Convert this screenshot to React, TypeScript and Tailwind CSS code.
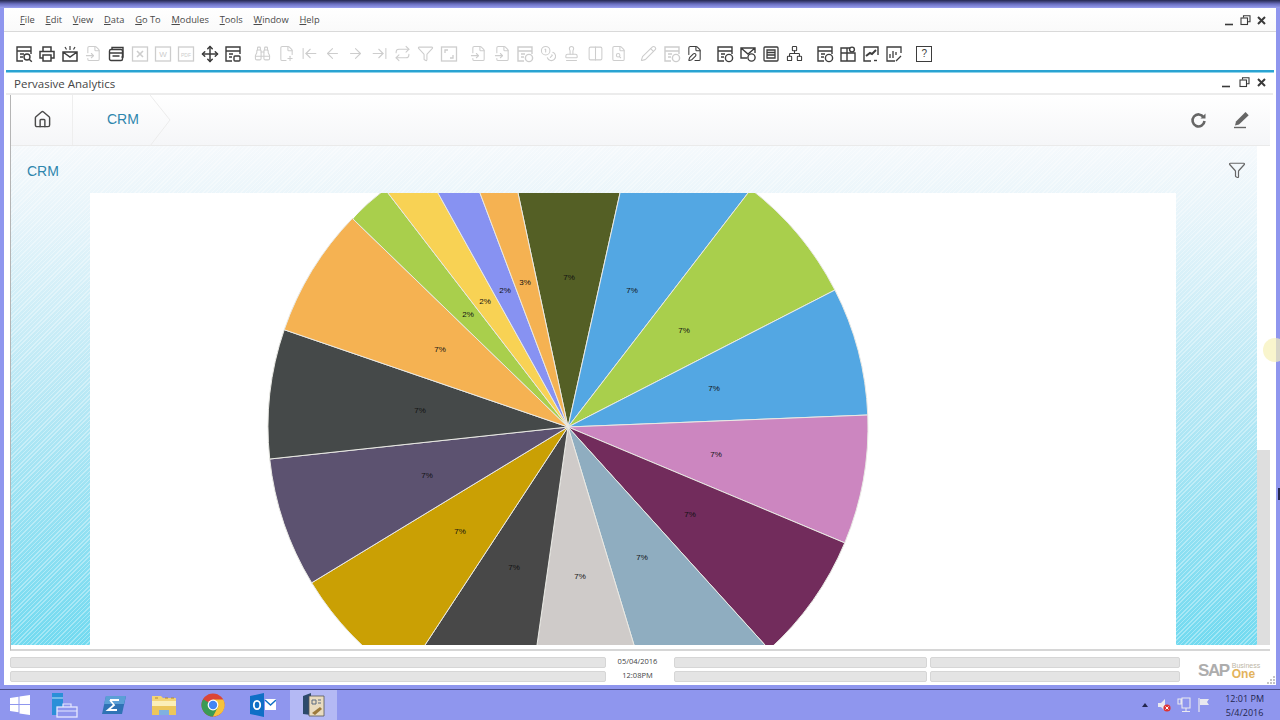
import type { ReactNode } from "react"
import {
  ArrowLeft,
  ArrowLeftToLine,
  ArrowRight,
  ArrowRightToLine,
  Binoculars,
  Coins,
  Columns2,
  FileInput,
  FilePen,
  FilePlus2,
  FileSearch,
  Funnel,
  House,
  Move,
  Network,
  Pencil,
  Repeat,
  Stamp,
} from "lucide-react"

const menu = [
  { key: "F", rest: "ile" },
  { key: "E", rest: "dit" },
  { key: "V", rest: "iew" },
  { key: "D", rest: "ata" },
  { key: "G", rest: "o To" },
  { key: "M", rest: "odules" },
  { key: "T", rest: "ools" },
  { key: "W", rest: "indow" },
  { key: "H", rest: "elp" },
]

const cx = 568
const cy = 427
const R = 300

// each slice ends where the next begins, going clockwise from the top
const slices = [
  { to: [52, -234], fill: "#545f25" },
  { to: [180, -234], fill: "#53a7e3" },
  { to: [267, -137], fill: "#a9cf4c" },
  { to: [300, -12], fill: "#53a7e3" },
  { to: [277, 116], fill: "#cc86c0" },
  { to: [197, 218], fill: "#722c5c" },
  { to: [66, 218], fill: "#8fadc0" },
  { to: [-31, 218], fill: "#cfcbc9" },
  { to: [-143, 218], fill: "#484848" },
  { to: [-255, 155], fill: "#caa004" },
  { to: [-298, 32], fill: "#5c5270" },
  { to: [-283, -97], fill: "#454949" },
  { to: [-215, -208], fill: "#f5b252" },
  { to: [-180, -234], fill: "#a9cf4c" },
  { to: [-130, -234], fill: "#f8d254" },
  { to: [-88, -234], fill: "#8792f2" },
  { to: [-50, -234], fill: "#f5b252" },
]

const labels = [
  [569, 277, "7%"],
  [632, 290, "7%"],
  [684, 330, "7%"],
  [714, 388, "7%"],
  [716, 454, "7%"],
  [690, 514, "7%"],
  [642, 557, "7%"],
  [580, 576, "7%"],
  [514, 567, "7%"],
  [460, 531, "7%"],
  [427, 475, "7%"],
  [420, 410, "7%"],
  [440, 349, "7%"],
  [468, 314, "2%"],
  [485, 301, "2%"],
  [505, 290, "2%"],
  [525, 282, "3%"],
] as const

function rim(v: number[]) {
  const len = Math.hypot(v[0], v[1])
  return [cx + (v[0] / len) * R, cy + (v[1] / len) * R]
}

function slicePath(i: number) {
  const prev = slices[(i + slices.length - 1) % slices.length].to
  const a = rim(prev)
  const b = rim(slices[i].to)
  return `M${cx} ${cy}L${a[0]} ${a[1]}A${R} ${R} 0 0 1 ${b[0]} ${b[1]}Z`
}

function PieChart() {
  return (
    <svg width="1086" height="452" viewBox="90 193 1086 452" className="block">
      {slices.map((s, i) => (
        <path key={i} d={slicePath(i)} fill={s.fill} stroke="#e9e9e4" strokeWidth="1" />
      ))}
      <path d="M353 219L375 192H340Z" fill="#ffffff" />
      {labels.map(([x, y, t], i) => (
        <text key={i} x={x} y={y + 3} textAnchor="middle" fontSize="8" fill="#111111" fontFamily="Liberation Sans, sans-serif">
          {t}
        </text>
      ))}
    </svg>
  )
}

function Form({ children }: { children?: ReactNode }) {
  return (
    <svg width="18" height="18" viewBox="0 0 18 18" fill="none" stroke="currentColor" strokeWidth="1.4">
      <path d="M8 16H2V2h14v7" />
      <path d="M2 6h14M5 9h4M5 12h3" />
      {children ?? <circle cx="13" cy="13" r="3.6" fill="#fff" />}
    </svg>
  )
}

function LetterBox({ text }: { text: string }) {
  return (
    <svg width="18" height="18" viewBox="0 0 18 18" fill="none" stroke="currentColor" strokeWidth="1.3">
      <rect x="1.5" y="2" width="15" height="14" />
      <text x="9" y="12" textAnchor="middle" fontSize={text.length > 1 ? 5 : 8} fill="currentColor" stroke="none" fontFamily="Liberation Sans, sans-serif">
        {text}
      </text>
    </svg>
  )
}

function Tool({ children, off }: { children: ReactNode; off?: boolean }) {
  return (
    <div className={`w-[23.25px] h-[18px] flex items-center justify-center ${off ? "text-[#cdcdcd]" : "text-[#3d3d3d]"}`}>
      {children}
    </div>
  )
}

function Toolbar() {
  const s = { size: 17, strokeWidth: 1.5 }
  return (
    <div className="h-[38px] shrink-0 flex items-center pt-[5px] pl-[8px] gap-[6.75px]">
      <div className="flex">
        <Tool>
          <Form>
            <circle cx="12" cy="12" r="3" fill="#fff" />
            <path d="M14.2 14.2l2.6 2.6" />
          </Form>
        </Tool>
        <Tool>
          <svg width="18" height="18" viewBox="0 0 18 18" fill="none" stroke="currentColor" strokeWidth="1.5">
            <path d="M5 6V2h8v4M5 13H2V6.5h14V13h-3" />
            <rect x="5" y="10" width="8" height="6" />
          </svg>
        </Tool>
        <Tool>
          <svg width="18" height="18" viewBox="0 0 18 18" fill="none" stroke="currentColor" strokeWidth="1.5">
            <path d="M2 7h14v9H2zM2 7l7 5 7-5" />
            <path d="M9 1v4M4 2l1.5 2.5M14 2l-1.5 2.5" strokeWidth="1.2" />
          </svg>
        </Tool>
        <Tool off><FileInput {...s} /></Tool>
        <Tool>
          <svg width="18" height="18" viewBox="0 0 18 18" fill="none" stroke="currentColor" strokeWidth="1.4">
            <path d="M4 4V2.5h11V12h-1.5" />
            <rect x="1.5" y="4.5" width="13" height="11" rx="1.5" />
            <path d="M1.5 8h13M4.5 11h7" />
          </svg>
        </Tool>
        <Tool off>
          <svg width="18" height="18" viewBox="0 0 18 18" fill="none" stroke="currentColor" strokeWidth="1.3">
            <rect x="1.5" y="2" width="15" height="14" />
            <path d="M6 6l6 6M12 6l-6 6" strokeWidth="1.6" />
          </svg>
        </Tool>
        <Tool off><LetterBox text="W" /></Tool>
        <Tool off><LetterBox text="PDF" /></Tool>
        <Tool><Move size={18} strokeWidth={2} /></Tool>
        <Tool>
          <Form>
            <rect x="10" y="11" width="6" height="5" rx="1" fill="#fff" />
          </Form>
        </Tool>
      </div>
      <div className="flex">
        <Tool off><Binoculars {...s} /></Tool>
        <Tool off><FilePlus2 {...s} /></Tool>
        <Tool off><ArrowLeftToLine {...s} /></Tool>
        <Tool off><ArrowLeft {...s} /></Tool>
        <Tool off><ArrowRight {...s} /></Tool>
        <Tool off><ArrowRightToLine {...s} /></Tool>
        <Tool off><Repeat {...s} /></Tool>
        <Tool off><Funnel {...s} /></Tool>
        <Tool off>
          <svg width="18" height="18" viewBox="0 0 18 18" fill="none" stroke="currentColor" strokeWidth="1.3">
            <rect x="1.5" y="2" width="15" height="14" />
            <path d="M5 8V5h3M13 10v3h-3" />
          </svg>
        </Tool>
      </div>
      <div className="flex">
        <Tool off><FileInput {...s} /></Tool>
        <Tool off><FileInput {...s} /></Tool>
        <Tool off><Form /></Tool>
        <Tool off><Coins {...s} /></Tool>
        <Tool off><Stamp {...s} /></Tool>
        <Tool off><Columns2 {...s} /></Tool>
        <Tool off><FileSearch {...s} /></Tool>
      </div>
      <div className="flex">
        <Tool off><Pencil {...s} /></Tool>
        <Tool off><Form /></Tool>
        <Tool><FilePen {...s} /></Tool>
      </div>
      <div className="flex">
        <Tool><Form /></Tool>
        <Tool>
          <svg width="18" height="18" viewBox="0 0 18 18" fill="none" stroke="currentColor" strokeWidth="1.4">
            <path d="M8 13H2V3h14v5M2 3l7 6 7-6" />
            <circle cx="12.5" cy="12.5" r="3.6" fill="#fff" />
          </svg>
        </Tool>
        <Tool>
          <svg width="18" height="18" viewBox="0 0 18 18" fill="none" stroke="currentColor" strokeWidth="1.3">
            <rect x="2" y="2" width="14" height="14" rx="1" />
            <path d="M5 5h8v8H5zM5 7.5h8M5 10h8" />
          </svg>
        </Tool>
        <Tool><Network {...s} /></Tool>
      </div>
      <div className="flex">
        <Tool><Form /></Tool>
        <Tool>
          <svg width="18" height="18" viewBox="0 0 18 18" fill="none" stroke="currentColor" strokeWidth="1.4">
            <path d="M2 8h14v8H2zM2 8V3h6v13M8 8V3h5" />
            <circle cx="13" cy="4.5" r="2.4" fill="#fff" />
          </svg>
        </Tool>
        <Tool>
          <svg width="18" height="18" viewBox="0 0 18 18" fill="none" stroke="currentColor" strokeWidth="1.4">
            <path d="M9 16H2V2h14v8" />
            <path d="M4 11l4-3 2 1 4-4" strokeWidth="2" />
            <path d="M12 15.5h3" />
          </svg>
        </Tool>
        <Tool>
          <svg width="18" height="18" viewBox="0 0 18 18" fill="none" stroke="currentColor" strokeWidth="1.3">
            <path d="M10 16H2V2h14v6" />
            <path d="M5 13V9M8 13V6M11 10V7M11 16l5-5" />
          </svg>
        </Tool>
      </div>
      <div className="flex">
        <Tool>
          <div className="w-[16px] h-[16px] border border-[#3d3d3d] flex items-center justify-center text-[10px] leading-none font-['Liberation_Sans',sans-serif]">
            ?
          </div>
        </Tool>
      </div>
    </div>
  )
}

function WindowButtons({ gap }: { gap: string }) {
  return (
    <div className={`flex items-center text-[#3a3a3a] ${gap}`}>
      <svg width="11" height="11" viewBox="0 0 11 11"><path d="M1 9.5h8" stroke="currentColor" strokeWidth="1.6" /></svg>
      <svg width="11" height="11" viewBox="0 0 11 11" fill="none" stroke="currentColor" strokeWidth="1.1">
        <path d="M3.5 2.5V.8h6.5v6H8" />
        <rect x="1" y="3" width="6.5" height="6.5" />
      </svg>
      <svg width="11" height="11" viewBox="0 0 11 11"><path d="M2 2l7 7M9 2l-7 7" stroke="currentColor" strokeWidth="2" /></svg>
    </div>
  )
}

function StatusPill() {
  return <div className="h-[11px] rounded-[2px] bg-[#e4e4e4] border border-[#d6d6d6]" />
}

function Taskbar() {
  return (
    <div className="h-[31px] border-t border-[#4b4f8f] bg-[#8f96ee] flex items-center">
      <div className="w-[40px] flex justify-center">
        <svg width="22" height="22" viewBox="0 0 22 22" fill="#fff">
          <path d="M1 4l8.5-1.2V10H1zM10.5 2.6L21 1v9h-10.5zM1 11h8.5v7.2L1 17zM10.5 11H21v10l-10.5-1.6z" />
        </svg>
      </div>
      <div className="w-[49.5px] flex justify-center">
        <svg width="28" height="26" viewBox="0 0 28 26">
          <path d="M1 1h11v22H1z" fill="#2a8fd8" />
          <path d="M1 6h11" stroke="#bfe3fa" strokeWidth="1" />
          <rect x="6" y="15" width="20" height="10" fill="#8f96ee" stroke="#e6e8ff" strokeWidth="1.3" />
          <path d="M12 15v-3h8v3M6 19h20" stroke="#e6e8ff" strokeWidth="1.2" fill="none" />
        </svg>
      </div>
      <div className="w-[49.5px] flex justify-center">
        <svg width="24" height="20" viewBox="0 0 24 20">
          <path d="M4 1h20l-4 18H0z" fill="#2f73b5" />
          <path d="M4 1h20l-2 8H2z" fill="#5b9fd6" />
          <path d="M8 5h9M8 5l4 5-6 5h9" fill="none" stroke="#fff" strokeWidth="1.8" />
        </svg>
      </div>
      <div className="w-[49.5px] flex justify-center">
        <svg width="26" height="24" viewBox="0 0 26 24">
          <path d="M1 3h9l2 2h13v17H1z" fill="#f3d478" />
          <path d="M1 8h24v5H1z" fill="#fbeeb8" />
          <path d="M1 13h24v9H1z" fill="#ecc65c" />
          <path d="M8 17h10v5H8z" fill="#7fb0e0" />
          <path d="M4 5h3M14 5h3M20 5h3" stroke="#b58a2c" strokeWidth="1" />
        </svg>
      </div>
      <div className="w-[49.5px] flex justify-center">
        <svg width="24" height="24" viewBox="0 0 24 24">
          <circle cx="12" cy="12" r="11.5" fill="#db4437" />
          <path d="M12 12L2.1 6.2A11.5 11.5 0 0 0 12 23.5l5.8-10z" fill="#3a9b54" />
          <path d="M12 6.5h10.3A11.5 11.5 0 0 1 12 23.5L17.5 13z" fill="#f5c33b" />
          <circle cx="12" cy="12" r="5.4" fill="#fff" />
          <circle cx="12" cy="12" r="4.2" fill="#4285f4" />
        </svg>
      </div>
      <div className="w-[49.5px] flex justify-center">
        <svg width="26" height="24" viewBox="0 0 26 24">
          <path d="M0 3l14-3v24L0 21z" fill="#0f6fc6" />
          <ellipse cx="7" cy="12" rx="3.2" ry="4.2" fill="none" stroke="#fff" strokeWidth="1.8" />
          <rect x="15" y="6" width="11" height="11" fill="#fff" />
          <path d="M15 7l5.5 5L26 7" fill="none" stroke="#0f6fc6" strokeWidth="1.4" />
        </svg>
      </div>
      <div className="w-[47px] ml-[2.5px] h-full bg-[#b4b9f4] flex justify-center items-center">
        <svg width="26" height="26" viewBox="0 0 26 26">
          <path d="M2 4l8-3v22l-8-1z" fill="#2d4a6b" />
          <path d="M8 4h15v20H8z" fill="#e9dcc0" stroke="#555" strokeWidth="0.8" />
          <path d="M11 8h4v4h-4zM17 8h3M17 11h3" stroke="#5a6b80" strokeWidth="1" fill="none" />
          <path d="M11 21l8-6 2 2-7 6z" fill="#9c7a3c" />
        </svg>
      </div>
      <div className="ml-auto flex items-center pr-[16px] text-[#23264f]">
        <div className="w-0 h-0 border-x-[3px] border-x-transparent border-b-[4px] border-b-[#23264f] mr-[9px]" />
        <svg width="14" height="14" viewBox="0 0 14 14" className="mr-[6px]">
          <path d="M1 5h3l4-4v12l-4-4H1z" fill="#e9e9ef" />
          <circle cx="10" cy="10" r="3.6" fill="#d33" />
          <path d="M8.5 8.5l3 3M11.5 8.5l-3 3" stroke="#fff" strokeWidth="1" />
        </svg>
        <svg width="14" height="16" viewBox="0 0 14 16" fill="none" stroke="#e9e9ef" strokeWidth="1.1" className="mr-[6px]">
          <path d="M5 1h8v10H5zM1 2h3v5H1zM9 11v3M5 14.5h8" />
        </svg>
        <svg width="14" height="16" viewBox="0 0 14 16" className="mr-[14px]">
          <path d="M2 1v14" stroke="#e9e9ef" strokeWidth="1.2" />
          <path d="M3 2h9l-2 3 2 3H3z" fill="#e9e9ef" />
        </svg>
        <div className="flex flex-col items-center pt-[1px] text-[9px] leading-[14px] font-['Open_Sans',sans-serif]">
          <span>12:01 PM</span>
          <span>5/4/2016</span>
        </div>
      </div>
    </div>
  )
}

export default function App() {
  return (
    <div className="w-[1280px] h-[720px] overflow-hidden relative flex flex-col bg-[#8f96ee] font-['Open_Sans',sans-serif]">
      <div className="h-[8px] bg-gradient-to-b from-[#25284f] via-[#6a6fc0] to-[#9ba1f0]" />

      <div className="mx-[4px] h-[677px] bg-white flex flex-col">
        <div className="h-[24px] shrink-0 border-b border-[#d9d9d9] flex items-center pl-[16px] pr-[9px] bg-gradient-to-b from-white to-[#fafafa]">
          <div className="flex gap-[10.8px] text-[9.3px] text-[#4a4a4a]">
            {menu.map((m) => (
              <span key={m.key}>
                <span className="underline">{m.key}</span>
                {m.rest}
              </span>
            ))}
          </div>
          <div className="ml-auto mt-[1px]">
            <WindowButtons gap="gap-[5px]" />
          </div>
        </div>

        <Toolbar />

        <div className="h-[3px] shrink-0 mx-[2px] bg-[#2aa3d2] border-b border-[#8fd3ea]" />

        <div className="h-[20px] shrink-0 flex items-center pt-[2px] pl-[10px] pr-[9px]">
          <span className="text-[11.5px] text-[#454545]">Pervasive Analytics</span>
          <div className="ml-auto -mt-[4px]">
            <WindowButtons gap="gap-[6.5px]" />
          </div>
        </div>
        <div className="h-[2px] shrink-0 bg-[#ececec] ml-[2px] mr-[3px]" />

        <div className="ml-[6px] mr-[6px] h-[556px] shrink-0 border-l border-[#b5b5b5] border-b-2 border-b-[#d6d6d6] flex flex-col">
          <div className="h-[51px] shrink-0 flex items-center relative border-b border-[#eaeaea] bg-gradient-to-b from-white to-[#f5f6f8]">
            <div className="w-[62px] h-full flex items-center justify-center border-r border-[#eeeeee] text-[#4a4a4a]">
              <House size={19} strokeWidth={1.8} className="-mt-[2px] ml-[2px]" />
            </div>
            <span className="ml-[34px] -mt-[2px] text-[14px] text-[#2f86ad] font-['Liberation_Sans',sans-serif]">CRM</span>
            <svg width="22" height="51" viewBox="0 0 22 51" fill="none" className="absolute left-[139px] top-0">
              <path d="M0 0l20 25L0 51" stroke="#ececec" strokeWidth="1" />
            </svg>
            <div className="ml-auto flex items-center gap-[26px] pr-[20px] text-[#666]">
              <svg width="17" height="17" viewBox="0 0 17 17" fill="none" stroke="currentColor" strokeWidth="2.6">
                <path d="M13.6 5.2A6 6 0 1 0 14.5 9" />
                <path d="M15.5 1.5v5h-5z" fill="currentColor" stroke="none" />
              </svg>
              <svg width="17" height="18" viewBox="0 0 17 18" fill="currentColor">
                <path d="M12.5 1l3.2 3.2L6 13.5l-4 1 1-4z" />
                <path d="M1 16.5h12" stroke="currentColor" strokeWidth="1.4" />
              </svg>
            </div>
          </div>

          <div className="flex flex-1 min-h-0">
            <div className="w-[1246px] bg-[repeating-linear-gradient(135deg,rgba(255,255,255,0.35)_0px,rgba(255,255,255,0.35)_1px,transparent_1px,transparent_3px),linear-gradient(180deg,#f5f9fc_0%,#e6f4fa_15%,#b8e8f5_50%,#72daf0_100%)] flex flex-col h-[499px]">
              <div className="h-[47px] shrink-0 flex items-center pl-[16px] pr-[11px]">
                <span className="mt-[3px] text-[14px] text-[#2f86ad] font-['Liberation_Sans',sans-serif]">CRM</span>
                <Funnel size={18} strokeWidth={1.6} className="ml-auto mt-[1px] text-[#666]" />
              </div>
              <div className="ml-[79px] w-[1086px] h-[452px] bg-white overflow-hidden">
                <PieChart />
              </div>
            </div>
            <div className="w-[13px] h-[499px] flex flex-col justify-end">
              <div className="h-[195px] bg-[#dedede]" />
            </div>
          </div>
        </div>

        <div className="flex-1 flex items-center pt-[3px] pl-[6px] pr-[14px] relative">
          <div className="w-[596px] flex flex-col gap-[3px]">
            <StatusPill />
            <StatusPill />
          </div>
          <div className="w-[68px] pr-[5px] -mt-[4px] flex flex-col gap-[4px] items-center text-[7.5px] leading-[10px] text-[#444]">
            <span>05/04/2016</span>
            <span>12:08PM</span>
          </div>
          <div className="w-[253px] flex flex-col gap-[3px]">
            <StatusPill />
            <StatusPill />
          </div>
          <div className="w-[250px] ml-[3px] flex flex-col gap-[3px]">
            <StatusPill />
            <StatusPill />
          </div>
          <div className="ml-[18px] mt-[1px] flex items-center font-['Liberation_Sans',sans-serif]">
            <span className="text-[17px] leading-none font-bold tracking-[-1.4px] text-[#adadad]">SAP</span>
            <div className="ml-[3px] flex flex-col text-[#e3b35c]">
              <span className="text-[7px] leading-[7px] text-[#bdb6a6]">Business</span>
              <span className="text-[12px] leading-[10px] font-bold">One</span>
            </div>
          </div>
          <svg width="8" height="8" viewBox="0 0 8 8" className="absolute right-[1px] bottom-[1px]" fill="#c4c4c4">
            <path d="M6 0h2v2H6zM3 3h2v2H3zM6 3h2v2H6zM0 6h2v2H0zM3 6h2v2H3zM6 6h2v2H6z" />
          </svg>
        </div>
      </div>

      <div className="h-[4px]" />
      <Taskbar />

      <div className="absolute left-[1263px] top-[338px] w-[24px] h-[24px] rounded-full bg-[#f6f1b8]/70" />
      <div className="absolute left-[1278px] top-[488px] w-[2px] h-[12px] bg-[#25284f]" />
    </div>
  )
}
